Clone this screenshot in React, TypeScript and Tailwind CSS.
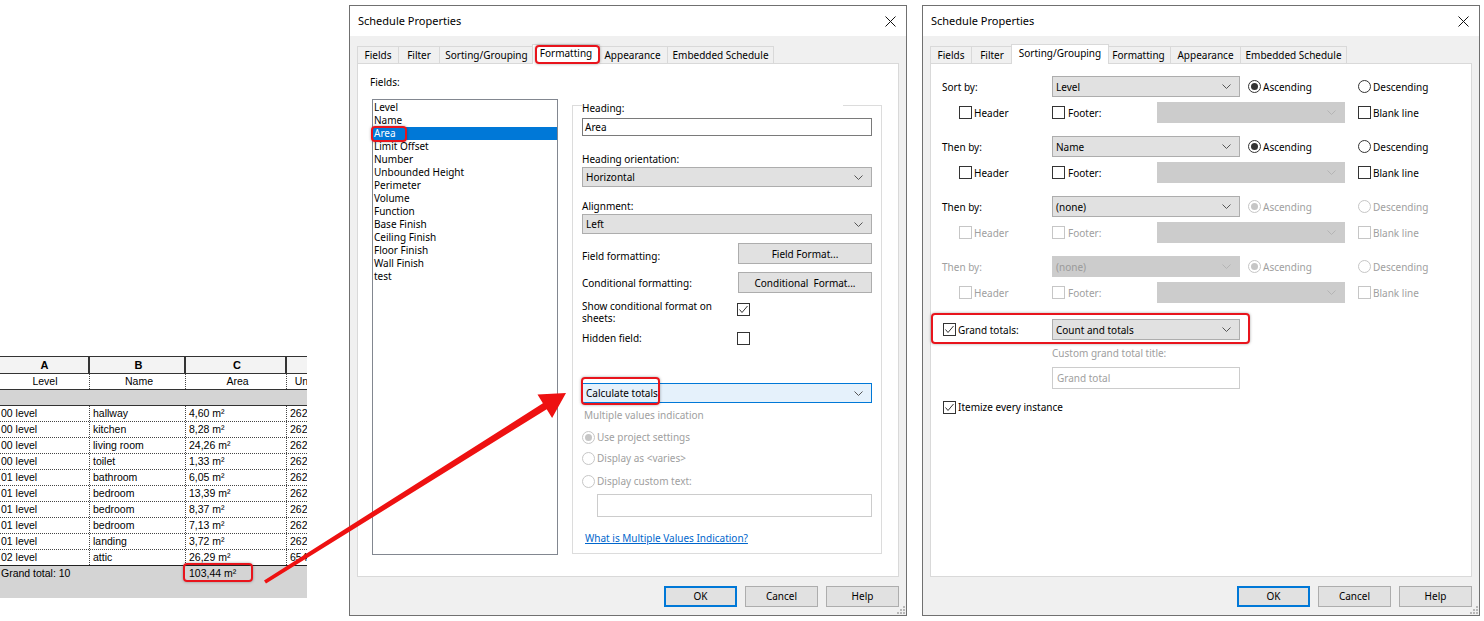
import React from 'react';

const UI = "font-['Segoe_UI','Noto_Sans',sans-serif] text-[10px] text-black";
const GRAY = 'text-[#a0a0a0]';

const TAB_NAMES = ['Fields', 'Filter', 'Sorting/Grouping', 'Formatting', 'Appearance', 'Embedded Schedule'];
// slot widths, and the same +4px for the raised (selected) tab
const TAB_W = ['w-[42px]', 'w-[41px]', 'w-[94px]', 'w-[64px]', 'w-[70px]', 'w-[106px]'];
const TAB_W_SEL = ['w-[46px]', 'w-[45px]', 'w-[98px]', 'w-[68px]', 'w-[74px]', 'w-[110px]'];

const FIELDS = [
  'Level', 'Name', 'Area', 'Limit Offset', 'Number', 'Unbounded Height', 'Perimeter',
  'Volume', 'Function', 'Base Finish', 'Ceiling Finish', 'Floor Finish', 'Wall Finish', 'test',
];

const ROOMS = [
  ['00 level', 'hallway', '4,60 m²', '2620'],
  ['00 level', 'kitchen', '8,28 m²', '2620'],
  ['00 level', 'living room', '24,26 m²', '2620'],
  ['00 level', 'toilet', '1,33 m²', '2620'],
  ['01 level', 'bathroom', '6,05 m²', '2620'],
  ['01 level', 'bedroom', '13,39 m²', '2620'],
  ['01 level', 'bedroom', '8,37 m²', '2620'],
  ['01 level', 'bedroom', '7,13 m²', '2620'],
  ['01 level', 'landing', '3,72 m²', '2620'],
  ['02 level', 'attic', '26,29 m²', '6540'],
];

function RedBox({ className }: { className: string }) {
  return (
    <span
      className={`pointer-events-none absolute rounded-[4px] border-2 border-[#e8141c] shadow-[0_0_3px_rgba(0,0,0,0.35)] ${className}`}
    />
  );
}

function Chevron({ disabled }: { disabled?: boolean }) {
  return (
    <svg width="9" height="5" viewBox="0 0 9 5" className="shrink-0">
      <polyline points="0.5,0.5 4.5,4.5 8.5,0.5" fill="none" stroke={disabled ? '#b4b4b4' : '#555'} strokeWidth="1" />
    </svg>
  );
}

function Select({
  value,
  className = '',
  disabled,
  focused,
}: {
  value: string;
  className?: string;
  disabled?: boolean;
  focused?: boolean;
}) {
  const skin = focused
    ? 'bg-[#e5f1fb] border-[#0078d7]'
    : disabled
      ? 'bg-[#cccccc] border-[#cccccc] text-[#9a9a9a]'
      : 'bg-[#e1e1e1] border-[#adadad]';
  return (
    <div className={`flex items-center justify-between border pl-[3px] pr-[8px] leading-[14px] ${skin} ${className}`}>
      <span>{value}</span>
      <Chevron disabled={disabled} />
    </div>
  );
}

function Check({ checked, disabled }: { checked?: boolean; disabled?: boolean }) {
  return (
    <span
      className={`flex h-[13px] w-[13px] shrink-0 items-center justify-center border bg-white ${
        disabled ? 'border-[#c6c6c6]' : 'border-[#333333]'
      }`}
    >
      {checked && (
        <svg width="11" height="11" viewBox="0 0 11 11">
          <polyline points="1.5,5.5 4,8.5 9.5,2" fill="none" stroke="#333" strokeWidth="1" />
        </svg>
      )}
    </span>
  );
}

function Radio({ checked, disabled }: { checked?: boolean; disabled?: boolean }) {
  return (
    <span
      className={`flex h-[13px] w-[13px] shrink-0 items-center justify-center rounded-full border bg-white ${
        disabled ? 'border-[#c6c6c6]' : 'border-[#333333]'
      }`}
    >
      {checked && <span className={`h-[7px] w-[7px] rounded-full ${disabled ? 'bg-[#c6c6c6]' : 'bg-[#333333]'}`} />}
    </span>
  );
}

function Btn({ children, className = '', primary }: { children: React.ReactNode; className?: string; primary?: boolean }) {
  return (
    <div
      className={`flex items-center justify-center bg-[#e1e1e1] ${
        primary ? 'border-2 border-[#0078d7]' : 'border border-[#adadad]'
      } ${className}`}
    >
      {children}
    </div>
  );
}

function Tabs({ active, mark }: { active: number; mark?: boolean }) {
  return (
    <div className="flex h-[27px] items-end whitespace-nowrap px-[7px]">
      {TAB_NAMES.map((t, i) =>
        i === active ? (
          <div
            key={t}
            className={`relative z-10 -mx-[2px] -mb-px flex h-[20px] items-center justify-center border border-b-0 border-[#d9d9d9] bg-white pb-[2px] ${TAB_W_SEL[i]}`}
          >
            {t}
            {mark && <RedBox className="left-[2px] top-0 h-[19px] w-[65px]" />}
          </div>
        ) : (
          <div
            key={t}
            className={`flex h-[17px] items-center justify-center border-t border-r border-[#d9d9d9] ${TAB_W[i]} ${
              i === 0 ? 'border-l' : ''
            }`}
          >
            {t}
          </div>
        ),
      )}
    </div>
  );
}

function Grip() {
  return (
    <svg width="8" height="8" viewBox="0 0 8 8" className="absolute bottom-[1px] right-[1px]">
      {[
        [6, 0],
        [6, 3],
        [3, 3],
        [6, 6],
        [3, 6],
        [0, 6],
      ].map(([x, y]) => (
        <rect key={`${x}-${y}`} x={x} y={y} width="2" height="2" fill="#b8b8b8" />
      ))}
    </svg>
  );
}

function Dialog({ active, markTab, children }: { active: number; markTab?: boolean; children: React.ReactNode }) {
  return (
    <div className={`relative flex h-[611px] w-[558px] shrink-0 flex-col border border-[#707070] bg-[#f0f0f0] ${UI}`}>
      <div className="flex h-[30px] items-center justify-between bg-white pl-[8px] pr-[10px]">
        <span className="text-[11px]">Schedule Properties</span>
        <svg width="11" height="11" viewBox="0 0 11 11">
          <path d="M0.5 0.5 L10.5 10.5 M10.5 0.5 L0.5 10.5" stroke="#111" strokeWidth="1" />
        </svg>
      </div>
      <Tabs active={active} mark={markTab} />
      <div className="mx-[7px] h-[514px] border border-[#d9d9d9] bg-white">{children}</div>
      <div className="mt-[9px] flex justify-end gap-[8px] pr-[7px]">
        <Btn primary className="h-[21px] w-[73px]">
          OK
        </Btn>
        <Btn className="h-[21px] w-[73px]">Cancel</Btn>
        <Btn className="h-[21px] w-[73px]">Help</Btn>
      </div>
      <Grip />
    </div>
  );
}

function FormattingPanel() {
  return (
    <div>
      <div className="pl-[12px] pt-[11px] leading-[14px]">Fields:</div>
      <div className="ml-[14px] mt-[10px] flex items-start">
        <div className="h-[456px] w-[186px] shrink-0 border border-[#828790] bg-white pt-[1px] leading-[13px]">
          {FIELDS.map((f) =>
            f === 'Area' ? (
              <div key={f} className="relative h-[13px] bg-[#0078d7] pl-[1px] text-white">
                {f}
                <RedBox className="-left-[2px] -top-[1px] h-[16px] w-[36px]" />
              </div>
            ) : (
              <div key={f} className="h-[13px] pl-[1px]">
                {f}
              </div>
            ),
          )}
        </div>

        <div className="ml-[14px] mt-[6px] flex h-[449px] w-[310px] flex-col border-x border-b border-[#dcdcdc]">
          <div className="flex h-px shrink-0">
            <div className="w-[9px] bg-[#dcdcdc]" />
            <div className="flex-1" />
            <div className="w-[38px] bg-[#dcdcdc]" />
          </div>
          <div className="flex flex-col px-[9px] leading-[14px]">
            <div className="-mt-[5px]">Heading:</div>
            <div className="mt-[3px] flex h-[18px] items-center border border-[#7a7a7a] bg-white pl-[2px]">Area</div>
            <div className="mt-[16px]">Heading orientation:</div>
            <Select value="Horizontal" className="mt-[1px] h-[20px]" />
            <div className="mt-[12px]">Alignment:</div>
            <Select value="Left" className="mt-[1px] h-[20px]" />

            <div className="mt-[9px] flex h-[21px] items-center justify-between">
              <span className="pt-[5px]">Field formatting:</span>
              <Btn className="h-[21px] w-[134px]">Field Format...</Btn>
            </div>
            <div className="mt-[8px] flex h-[21px] items-center justify-between">
              <span>Conditional formatting:</span>
              <Btn className="h-[21px] w-[134px]">Conditional&nbsp; Format...</Btn>
            </div>

            <div className="mt-[7px] flex">
              <span className="w-[155px] leading-[12px]">
                Show conditional format on
                <br />
                sheets:
              </span>
              <span className="mt-[3px]">
                <Check checked />
              </span>
            </div>
            <div className="mt-[7px] flex h-[14px] items-center">
              <span className="w-[155px]">Hidden field:</span>
              <Check />
            </div>

            <div className="relative mt-[38px]">
              <Select focused value="Calculate totals" className="h-[20px]" />
              <RedBox className="-left-[1px] -top-[6px] h-[28px] w-[79px]" />
            </div>
            <div className={`mt-[5px] pl-[2px] ${GRAY}`}>Multiple values indication</div>
            <div className="mt-[7px] flex h-[16px] items-center gap-[2px]">
              <Radio checked disabled />
              <span className={GRAY}>Use project settings</span>
            </div>
            <div className="mt-[5px] flex h-[16px] items-center gap-[2px]">
              <Radio disabled />
              <span className={GRAY}>{'Display as <varies>'}</span>
            </div>
            <div className="mt-[7px] flex h-[16px] items-center gap-[2px]">
              <Radio disabled />
              <span className={GRAY}>Display custom text:</span>
            </div>
            <div className="ml-[15px] mt-[5px] h-[23px] w-[275px] border border-[#cccccc] bg-white" />
            <div className="mt-[14px] pl-[3px] text-[#0066cc] underline">What is Multiple Values Indication?</div>
          </div>
        </div>
      </div>
    </div>
  );
}

function SortGroup({ label, value, state }: { label: string; value: string; state: 'on' | 'half' | 'off' }) {
  const subOff = state !== 'on';
  return (
    <div className="h-[60px]">
      <div className="flex h-[21px] items-center pl-[11px]">
        <span className={`w-[110px] ${state === 'off' ? GRAY : ''}`}>{label}</span>
        <Select value={value} disabled={state === 'off'} className="h-[21px] w-[188px]" />
        <span className="ml-[8px] flex w-[110px] items-center gap-[2px]">
          <Radio checked disabled={subOff} />
          <span className={subOff ? GRAY : ''}>Ascending</span>
        </span>
        <span className="flex items-center gap-[2px]">
          <Radio disabled={subOff} />
          <span className={subOff ? GRAY : ''}>Descending</span>
        </span>
      </div>
      <div className="mt-[5px] flex h-[21px] items-center pl-[28px]">
        <span className="flex w-[93px] items-center gap-[2px]">
          <Check disabled={subOff} />
          <span className={subOff ? GRAY : ''}>Header</span>
        </span>
        <span className="flex w-[105px] items-center gap-[3px]">
          <Check disabled={subOff} />
          <span className={subOff ? GRAY : ''}>Footer:</span>
        </span>
        <Select value="" disabled className="h-[21px] w-[188px]" />
        <span className="ml-[13px] flex items-center gap-[2px]">
          <Check disabled={subOff} />
          <span className={subOff ? GRAY : ''}>Blank line</span>
        </span>
      </div>
    </div>
  );
}

function SortingPanel() {
  return (
    <div className="flex flex-col pt-[12px] leading-[14px]">
      <SortGroup label="Sort by:" value="Level" state="on" />
      <SortGroup label="Then by:" value="Name" state="on" />
      <SortGroup label="Then by:" value="(none)" state="half" />
      <SortGroup label="Then by:" value="(none)" state="off" />

      <div className="relative mt-[3px] flex h-[21px] items-center pl-[12px]">
        <span className="flex w-[109px] items-center gap-[2px]">
          <Check checked />
          <span>Grand totals:</span>
        </span>
        <Select value="Count and totals" className="h-[21px] w-[188px]" />
        <RedBox className="-top-[6px] left-0 h-[31px] w-[319px]" />
      </div>
      <div className={`mt-[6px] pl-[121px] ${GRAY}`}>Custom grand total title:</div>
      <div className={`ml-[121px] mt-[7px] flex h-[22px] w-[188px] items-center border border-[#cccccc] bg-white pl-[4px] ${GRAY}`}>
        Grand total
      </div>
      <div className="mt-[11px] flex h-[14px] items-center gap-[2px] pl-[12px]">
        <Check checked />
        <span>Itemize every instance</span>
      </div>
    </div>
  );
}

function ScheduleTable() {
  const cols = ['w-[90px] pl-[1px]', 'w-[96px] pl-[3px]', 'w-[101px] pl-[3px]', 'w-[100px] pl-[3px]'];
  const dot = 'border-r border-dotted border-[#444]';
  return (
    <div className="w-[307px] overflow-hidden font-['Liberation_Sans',Arial,sans-serif] text-[10.5px] leading-[15px] text-black">
      <div className="w-[387px] border-t border-[#333]">
        <div className="flex h-[17px] border-b border-[#333] bg-[#f3f3f3] text-[11px] font-bold">
          {['A', 'B', 'C', 'D'].map((h, i) => (
            <div
              key={h}
              className={`flex items-center justify-center ${cols[i]} ${i < 3 ? 'border-r-2 border-[#333]' : ''}`}
            >
              {h}
            </div>
          ))}
        </div>
        <div className="flex h-[16px] border-b border-[#333]">
          {['Level', 'Name', 'Area', 'Unbounded Height'].map((h, i) => (
            <div key={h} className={`flex items-center justify-center whitespace-nowrap ${cols[i]} ${i < 3 ? dot : ''}`}>
              {h}
            </div>
          ))}
        </div>
        <div className="h-[16px] border-b border-[#333] bg-[#d4d4d4]" />
        {ROOMS.map((r, ri) => (
          <div
            key={ri}
            className={`flex h-[16px] border-b ${ri === ROOMS.length - 1 ? 'border-solid border-[#222]' : 'border-dotted border-[#444]'}`}
          >
            {r.map((c, i) => (
              <div key={i} className={`flex items-center whitespace-nowrap ${cols[i]} ${i < 3 ? dot : ''}`}>
                {c}
              </div>
            ))}
          </div>
        ))}
        <div className="flex h-[32px] bg-[#d4d4d4]">
          <div className="w-[186px] pl-[1px]">Grand total: 10</div>
          <div className="relative w-[101px] pl-[3px]">
            103,44 m²
            <RedBox className="-left-[3px] -top-[3px] h-[19px] w-[70px]" />
          </div>
        </div>
      </div>
    </div>
  );
}

function Arrow() {
  return (
    <svg className="pointer-events-none absolute left-0 top-0 z-20" width="1484" height="621" viewBox="0 0 1484 621">
      <polygon
        points="264,580.5 542.9,403.3 537.5,394.6 566,393 552.1,418 546.7,409.3 266,583.5"
        fill="#ee1111"
      />
    </svg>
  );
}

export default function App() {
  return (
    <div className="relative flex h-[621px] w-[1484px] items-start overflow-hidden bg-white pt-[5px]">
      <div className="w-[349px] shrink-0 pt-[351px]">
        <ScheduleTable />
      </div>
      <Dialog active={3} markTab>
        <FormattingPanel />
      </Dialog>
      <div className="ml-[15px]">
        <Dialog active={2}>
          <SortingPanel />
        </Dialog>
      </div>
      <Arrow />
    </div>
  );
}
